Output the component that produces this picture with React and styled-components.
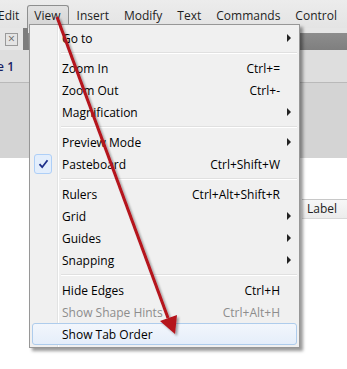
import React from 'react';
import styled, { createGlobalStyle } from 'styled-components';

const GlobalStyle = createGlobalStyle`
  html, body { margin: 0; padding: 0; background: #fff; }
  body { font-family: "Open Sans", "Noto Sans", "DejaVu Sans", sans-serif; }
`;

const menuItems = [
  { label: 'Go to', sub: true },
  { sep: true },
  { label: 'Zoom In', key: 'Ctrl+=' },
  { label: 'Zoom Out', key: 'Ctrl+-' },
  { label: 'Magnification', sub: true },
  { sep: true },
  { label: 'Preview Mode', sub: true },
  { label: 'Pasteboard', key: 'Ctrl+Shift+W', checked: true },
  { sep: true },
  { label: 'Rulers', key: 'Ctrl+Alt+Shift+R' },
  { label: 'Grid', sub: true },
  { label: 'Guides', sub: true },
  { label: 'Snapping', sub: true },
  { sep: true },
  { label: 'Hide Edges', key: 'Ctrl+H' },
  { label: 'Show Shape Hints', key: 'Ctrl+Alt+H', disabled: true },
  { label: 'Show Tab Order', hover: true },
];

const topMenus = ['Edit', 'View', 'Insert', 'Modify', 'Text', 'Commands', 'Control'];

const App = () => (
  <>
    <GlobalStyle />
    <Page>
      <MenuBar>
        {topMenus.map((m) => (
          <TopItem key={m} open={m === 'View'}>{m}</TopItem>
        ))}
      </MenuBar>
      <TabBar>
        <Tab>
          <CloseBox>×</CloseBox>
        </Tab>
        <TabFill />
      </TabBar>
      <SceneBar>
        <SceneName>Scene 1</SceneName>
      </SceneBar>
      <Stage />
      <Pasteboard>
        <LabelRow>Label</LabelRow>
      </Pasteboard>

      <Dropdown>
        {menuItems.map((it, i) =>
          it.sep ? (
            <Separator key={i} />
          ) : (
            <Item key={i} hover={it.hover} disabled={it.disabled}>
              <Gutter>
                {it.checked && (
                  <CheckBox>
                    <svg width="11" height="10" viewBox="0 0 11 10">
                      <path d="M1.5 5.2 L4.2 8.2 L9.5 1.2" fill="none" stroke="#1d2f8a" strokeWidth="1.8" />
                    </svg>
                  </CheckBox>
                )}
              </Gutter>
              <Label>{it.label}</Label>
              {it.key && <Shortcut>{it.key}</Shortcut>}
              <Arrow>{it.sub && <ArrowHead />}</Arrow>
            </Item>
          )
        )}
      </Dropdown>

      <Pointer width="347" height="369" viewBox="0 0 347 369">
        <defs>
          <filter id="sh" x="-20%" y="-20%" width="140%" height="140%">
            <feDropShadow dx="2" dy="2" stdDeviation="1.2" floodColor="#000" floodOpacity="0.35" />
          </filter>
        </defs>
        <g filter="url(#sh)">
          <line x1="57" y1="17" x2="168" y2="318" stroke="#b5121b" strokeWidth="3" />
          <polygon points="175,334 160,321 177,315" fill="#b5121b" />
        </g>
      </Pointer>
    </Page>
  </>
);

export default App;

const Page = styled.div`
  position: relative;
  width: 347px;
  height: 369px;
  overflow: hidden;
  background: #fff;
  display: flex;
  flex-direction: column;
`;

const MenuBar = styled.div`
  height: 28px;
  display: flex;
  align-items: flex-end;
  margin-left: -9px;
  background: linear-gradient(#ececec, #e4e4e4);
  font-size: 12px;
  color: #1e1e1e;
`;

const TopItem = styled.div`
  height: 23px;
  line-height: 20px;
  padding: 0 ${({ open }) => (open ? '7px' : '6px')} 0 6px;
  margin-right: 1px;
  box-sizing: border-box;
  border: 1px solid ${({ open }) => (open ? '#8e8f8f' : 'transparent')};
  border-bottom: none;
  border-radius: 3px 3px 0 0;
  background: ${({ open }) => (open ? 'linear-gradient(#e2e2e2, #d4d4d4)' : 'transparent')};
  white-space: nowrap;
`;

const TabBar = styled.div`
  height: 22px;
  display: flex;
  background: #e6e6e6;
`;

const Tab = styled.div`
  width: 23px;
  display: flex;
  align-items: center;
  justify-content: center;
  border-right: 5px solid #7d7d7d;
`;

const CloseBox = styled.div`
  width: 11px;
  height: 11px;
  border: 1px solid #9a9a9a;
  background: #e4e4e4;
  color: #666;
  font-size: 12px;
  line-height: 10px;
  text-align: center;
`;

const TabFill = styled.div`
  flex: 1;
  margin-top: 5px;
  background: linear-gradient(#8d8d8d, #7f7f7f);
`;

const SceneBar = styled.div`
  height: 32px;
  display: flex;
  align-items: center;
  background: #dedede;
  border-bottom: 1px solid #b9b9b9;
`;

const SceneName = styled.span`
  margin-left: -30px;
  font-size: 12px;
  font-weight: 600;
  color: #172063;
  white-space: nowrap;
`;

const Stage = styled.div`
  height: 75px;
  background: #d4d4d4;
`;

const Pasteboard = styled.div`
  flex: 1;
  background: #fff;
  padding-top: 41px;
`;

const LabelRow = styled.div`
  margin-left: 302px;
  height: 18px;
  line-height: 18px;
  padding-left: 5px;
  font-size: 12px;
  color: #222;
  border-top: 1px solid #c8c8c8;
  border-bottom: 1px solid #d8d8d8;
  background: linear-gradient(#f7f7f7, #ececec);
`;

const Dropdown = styled.div`
  position: absolute;
  left: 29px;
  top: 24px;
  width: 271px;
  height: 324px;
  box-sizing: border-box;
  padding: 2px;
  background: #f0f0f0;
  border: 1px solid #979797;
  box-shadow: 3px 3px 3px rgba(0, 0, 0, 0.4);
  display: flex;
  flex-direction: column;
  font-size: 12px;
  &::before {
    content: '';
    position: absolute;
    left: 27px;
    top: 0;
    bottom: 0;
    width: 1px;
    background: #e2e3e3;
    border-right: 1px solid #fff;
  }
`;

const Separator = styled.div`
  height: 8px;
  margin-left: 28px;
  position: relative;
  &::after {
    content: '';
    position: absolute;
    left: 1px;
    right: 0;
    top: 3px;
    height: 1px;
    background: #e0e0e0;
    border-bottom: 1px solid #fff;
  }
`;

const Item = styled.div`
  position: relative;
  height: 22px;
  display: flex;
  align-items: center;
  box-sizing: border-box;
  color: ${({ disabled }) => (disabled ? '#8d8d8d' : '#000')};
  border: 1px solid ${({ hover }) => (hover ? '#aeccec' : 'transparent')};
  border-radius: 3px;
  background: ${({ hover }) => (hover ? 'linear-gradient(#f2f6fc, #e5eefa)' : 'transparent')};
  z-index: 1;
`;

const Gutter = styled.div`
  width: 28px;
  height: 100%;
  display: flex;
  align-items: center;
  padding-left: 1px;
`;

const CheckBox = styled.div`
  width: 18px;
  height: 20px;
  box-sizing: border-box;
  border: 1px solid #aecff7;
  border-radius: 3px;
  background: #e3eefc;
  display: flex;
  align-items: center;
  justify-content: center;
`;

const Label = styled.span`
  flex: 1;
  white-space: nowrap;
`;

const Shortcut = styled.span`
  white-space: nowrap;
`;

const Arrow = styled.div`
  width: 16px;
  display: flex;
  justify-content: flex-start;
`;

const ArrowHead = styled.div`
  width: 0;
  height: 0;
  margin-left: 7px;
  border-top: 4px solid transparent;
  border-bottom: 4px solid transparent;
  border-left: 4px solid #222;
`;

const Pointer = styled.svg`
  position: absolute;
  left: 0;
  top: 0;
  pointer-events: none;
  z-index: 5;
`;
